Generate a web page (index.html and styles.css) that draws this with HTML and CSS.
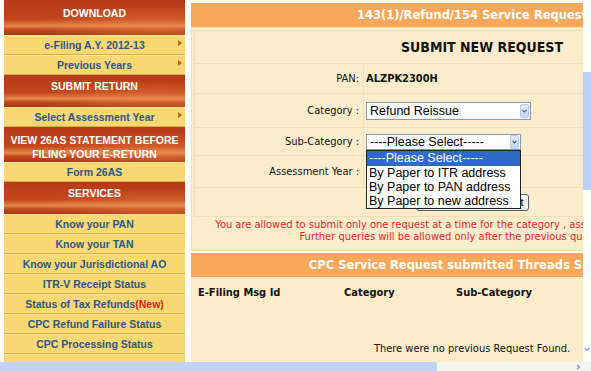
FILE: index.html
```html
<!DOCTYPE html>
<html lang="en">
<head>
    <meta charset="UTF-8">
    <title>143(1)/Refund/154 Service Request</title>
    <link rel="stylesheet" href="styles.css">
</head>
<body>
    <div class="window">
        <div class="viewport">
            <div class="page">
                <nav class="sidebar">
                    <div class="side-head side-head--tall">DOWNLOAD</div>
                    <a class="side-link has-arrow">e-Filing A.Y. 2012-13</a>
                    <a class="side-link has-arrow">Previous Years</a>
                    <div class="side-head">SUBMIT RETURN</div>
                    <a class="side-link has-arrow">Select Assessment Year</a>
                    <div class="side-head side-head--tall">VIEW 26AS STATEMENT BEFORE<br>FILING YOUR E-RETURN</div>
                    <a class="side-link">Form 26AS</a>
                    <div class="side-head">SERVICES</div>
                    <a class="side-link">Know your PAN</a>
                    <a class="side-link">Know your TAN</a>
                    <a class="side-link">Know your Jurisdictional AO</a>
                    <a class="side-link">ITR-V Receipt Status</a>
                    <a class="side-link">Status of Tax Refunds<span class="new">(New)</span></a>
                    <a class="side-link">CPC Refund Failure Status</a>
                    <a class="side-link">CPC Processing Status</a>
                    <a class="side-link">&nbsp;</a>
                </nav>

                <main class="content">
                    <div class="bar">143(1)/Refund/154 Service Request</div>
                    <div class="form-box">
                        <table class="form-table">
                            <tr class="row-title">
                                <td colspan="2">SUBMIT NEW REQUEST</td>
                            </tr>
                            <tr class="row-pan">
                                <td class="lbl">PAN:</td>
                                <td class="val"><b>ALZPK2300H</b></td>
                            </tr>
                            <tr class="row-cat">
                                <td class="lbl">Category :</td>
                                <td class="val">
                                    <div class="select select--cat">
                                        <span class="select-text">Refund Reissue</span>
                                        <span class="select-btn"><svg width="5" height="4" viewBox="0 0 5 4"><polyline points="0.5,0.8 2.5,2.8 4.5,0.8" fill="none" stroke="#4d6185" stroke-width="1.2"/></svg></span>
                                    </div>
                                </td>
                            </tr>
                            <tr class="row-sub">
                                <td class="lbl">Sub-Category :</td>
                                <td class="val">
                                    <div class="select select--sub">
                                        <span class="select-text">----Please Select-----</span>
                                        <span class="select-btn"><svg width="5" height="4" viewBox="0 0 5 4"><polyline points="0.5,0.8 2.5,2.8 4.5,0.8" fill="none" stroke="#4d6185" stroke-width="1.2"/></svg></span>
                                        <ul class="dropdown">
                                            <li class="selected">----Please Select-----</li>
                                            <li>By Paper to ITR address</li>
                                            <li>By Paper to PAN address</li>
                                            <li>By Paper to new address</li>
                                        </ul>
                                    </div>
                                </td>
                            </tr>
                            <tr class="row-ay">
                                <td class="lbl">Assessment Year :</td>
                                <td class="val">
                                    <div class="select select--ay"></div>
                                </td>
                            </tr>
                            <tr class="row-btn">
                                <td colspan="2"><button class="submit">Submit New Request</button></td>
                            </tr>
                        </table>
                        <p class="note">You are allowed to submit only one request at a time for the category , assessment year &amp; subcategory<br>Further queries will be allowed only after the previous query is closed</p>
                    </div>

                    <div class="bar bar--second">CPC Service Request submitted Threads Summary</div>
                    <div class="threads-box">
                        <table class="threads">
                            <colgroup>
                                <col class="c-msg">
                                <col class="c-cat">
                                <col class="c-sub">
                                <col>
                            </colgroup>
                            <tr>
                                <th>E-Filing Msg Id</th>
                                <th>Category</th>
                                <th>Sub-Category</th>
                                <th>Status</th>
                            </tr>
                        </table>
                        <p class="empty">There were no previous Request Found.</p>
                    </div>
                </main>
            </div>

            <div class="vscroll">
                <div class="vthumb"></div>
                <svg class="arrow-down" width="6" height="5" viewBox="0 0 6 5"><polyline points="0.8,1 3,3.4 5.2,1" fill="none" stroke="#7f9cd6" stroke-width="1.3"/></svg>
            </div>
        </div>
        <div class="hscroll">
            <div class="hthumb"></div>
            <svg class="arrow-right" width="5" height="6" viewBox="0 0 5 6"><polyline points="1,0.8 3.4,3 1,5.2" fill="none" stroke="#7f9cd6" stroke-width="1.3"/></svg>
        </div>
    </div>
</body>
</html>
```

FILE: styles.css
```css
* {
    box-sizing: border-box;
}

body {
    margin: 0;
    background: #fff;
    overflow: hidden;
}

.window {
    width: 591px;
    height: 371px;
    display: flex;
    flex-direction: column;
}

.viewport {
    flex: 1;
    min-height: 0;
    display: flex;
}

.page {
    flex: 1;
    min-width: 0;
    overflow: hidden;
    display: flex;
    align-items: flex-start;
}

/* left menu */
.sidebar {
    flex: none;
    width: 181px;
    margin-left: 4px;
    font: bold 10.5px "Liberation Sans", Arial, sans-serif;
}

.side-head {
    height: 32px;
    padding-top: 4px;
    line-height: 14px;
    text-align: center;
    color: #fff;
    background:
        radial-gradient(ellipse at 85% 75%, rgba(240, 140, 80, 0.45) 0%, rgba(240, 140, 80, 0) 55%),
        linear-gradient(180deg, #b63b17 0%, #c3461b 55%, #d9713a 68%, #e38a4c 74%, #c4491b 84%, #a9340f 100%);
}

.side-head--tall {
    height: 35px;
    padding-top: 6px;
}

.side-link {
    display: block;
    position: relative;
    height: 20px;
    line-height: 19px;
    text-align: center;
    color: #2d5589;
    background: #f7d872;
    border-top: 1px solid #fbe5a0;
    border-bottom: 1px solid #d6ae4a;
}

.side-link.has-arrow::after {
    content: "";
    position: absolute;
    right: 3px;
    top: 4px;
    border-left: 4px solid #cf5c16;
    border-top: 3px solid transparent;
    border-bottom: 3px solid transparent;
}

.new {
    color: #e3201f;
}

/* right panel */
.content {
    flex: none;
    width: 562px;
    margin: 3px 0 0 6px;
    font-family: "DejaVu Sans Condensed", "DejaVu Sans", Verdana, sans-serif;
    font-size: 11px;
    color: #111;
}

.bar {
    height: 24px;
    font: bold 11.5px "DejaVu Sans", Verdana, sans-serif;
    line-height: 24px;
    text-align: center;
    color: #fff;
    background: #f8a75b;
}

.bar--second {
    margin-top: 2px;
}

.form-box {
    background: #fbedcc;
    padding: 2px 2px 7px;
    border: 1px solid #f3dcae;
}

.form-table {
    width: 100%;
    border-collapse: collapse;
    border: 1px solid #f1d7a8;
}

.form-table td {
    border: 1px solid #f3dfb6;
    padding: 0;
}

.row-title td {
    height: 33px;
    text-align: center;
    padding-left: 20px;
    font-size: 14px;
    font-weight: bold;
}

.row-pan td { height: 30px; }
.row-cat td { height: 34px; }
.row-sub td { height: 28px; }
.row-ay td { height: 32px; }
.row-btn td { height: 29px; text-align: center; }

.form-table .lbl {
    width: 169px;
    text-align: right;
    padding-right: 4px;
}

.form-table .val {
    padding-left: 2px;
}

.select {
    position: relative;
    display: flex;
    align-items: center;
    background: #fff;
    border: 1px solid #7f9db9;
    font: 12.5px "Liberation Sans", Arial, sans-serif;
    color: #000;
}

.select--cat {
    width: 165px;
    height: 18px;
}

.select--sub {
    width: 155px;
    height: 16px;
}

.select--ay {
    width: 120px;
    height: 17px;
}

.select-text {
    flex: 1;
    padding-left: 3px;
    white-space: nowrap;
}

.select-btn {
    width: 9px;
    height: 14px;
    margin-right: 1px;
    display: flex;
    align-items: center;
    justify-content: center;
    border-radius: 2px;
    background: linear-gradient(180deg, #e3ebfd 0%, #c2d3f8 100%);
    border: 1px solid #b9cbf2;
}

.dropdown {
    position: absolute;
    top: 15px;
    left: -1px;
    width: 155px;
    margin: 0;
    padding: 0;
    list-style: none;
    background: #fff;
    border: 1px solid #222;
    z-index: 2;
}

.dropdown li {
    height: 14px;
    line-height: 14px;
    padding-left: 2px;
    white-space: nowrap;
}

.dropdown li.selected {
    height: 15px;
    line-height: 15px;
    color: #fff;
    background: #316ac5;
}

.submit {
    width: 113px;
    height: 17px;
    padding: 0;
    font: 11px "Liberation Sans", Arial, sans-serif;
    color: #000;
    background: linear-gradient(180deg, #fff 0%, #ecebe6 100%);
    border: 1px solid #4b5b7a;
    border-radius: 3px;
}

.note {
    margin: 2px 0 0;
    line-height: 12px;
    text-align: center;
    color: #e3252b;
    white-space: nowrap;
}

.threads-box {
    background: #fbedcc;
    height: 90px;
    padding: 0 3px;
}

.threads {
    width: 100%;
    border-collapse: collapse;
    table-layout: fixed;
}

.c-msg { width: 146px; }
.c-cat { width: 112px; }
.c-sub { width: 150px; }

.threads th {
    height: 30px;
    padding-left: 4px;
    text-align: left;
    font-weight: bold;
}

.empty {
    margin: 35px 0 0;
    line-height: 14px;
    text-align: center;
}

/* fake window scrollbars */
.vscroll {
    flex: none;
    width: 8px;
    display: flex;
    flex-direction: column;
    align-items: center;
    background: #fbfbf8;
}

.vthumb {
    width: 8px;
    height: 118px;
    margin-top: 72px;
    background: #bccff7;
}

.arrow-down {
    margin-top: auto;
    margin-bottom: 10px;
}

.hscroll {
    flex: none;
    height: 9px;
    display: flex;
    align-items: center;
    background: #f4f4f0;
}

.hthumb {
    width: 437px;
    height: 9px;
    background: #c1d3f5;
}

.arrow-right {
    margin-left: auto;
    margin-right: 10px;
}
```
